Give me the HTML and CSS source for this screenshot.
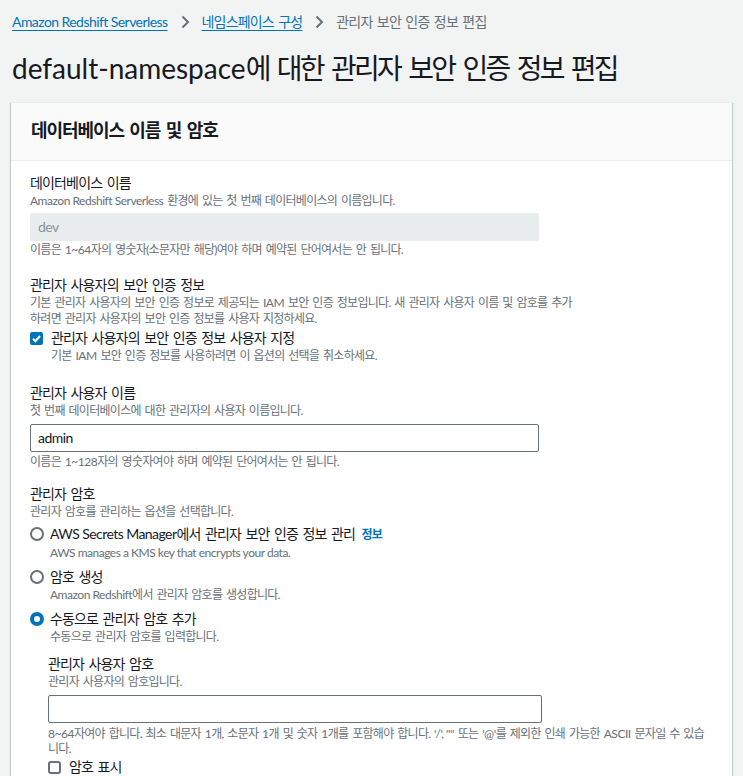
FILE: index.html
```html
<!DOCTYPE html>
<html lang="ko">
<head>
<meta charset="utf-8">
<title>관리자 보안 인증 정보 편집</title>
<link rel="stylesheet" href="styles.css">
</head>
<body>
<nav class="crumbs">
  <a class="crumb-link en" href="#">Amazon Redshift Serverless</a>
  <svg class="chev" width="16" height="16" viewBox="0 0 16 16"><path d="M5.5 2.5 11 8l-5.5 5.5" fill="none" stroke="#687078" stroke-width="2"/></svg>
  <a class="crumb-link" href="#">네임스페이스 구성</a>
  <svg class="chev" width="16" height="16" viewBox="0 0 16 16"><path d="M5.5 2.5 11 8l-5.5 5.5" fill="none" stroke="#687078" stroke-width="2"/></svg>
  <span class="crumb-current">관리자 보안 인증 정보 편집</span>
</nav>

<h1 class="title"><span class="en">default-namespace</span>에 대한 관리자 보안 인증 정보 편집</h1>

<section class="card">
  <header class="card-head">
    <h2 class="card-title">데이터베이스 이름 및 암호</h2>
  </header>
  <div class="card-body">

    <div class="field f1">
      <div class="label">데이터베이스 이름</div>
      <div class="desc"><span class="en">Amazon Redshift Serverless</span> 환경에 있는 첫 번째 데이터베이스의 이름입니다.</div>
      <div class="input disabled"><span class="en">dev</span></div>
      <div class="hint">이름은 <span class="en">1~64</span>자의 영숫자(소문자만 해당)여야 하며 예약된 단어여서는 안 됩니다.</div>
    </div>

    <div class="field f2">
      <div class="label">관리자 사용자의 보안 인증 정보</div>
      <div class="desc">기본 관리자 사용자의 보안 인증 정보로 제공되는 <span class="en">IAM</span> 보안 인증 정보입니다. 새 관리자 사용자 이름 및 암호를 추가<br>하려면 관리자 사용자의 보안 인증 정보를 사용자 지정하세요.</div>
      <div class="check-row">
        <span class="checkbox checked"><svg width="13" height="13" viewBox="0 0 13 13"><path d="M3 6.8 5.4 9.2 10 4" fill="none" stroke="#fff" stroke-width="2"/></svg></span>
        <div class="check-text">
          <div class="opt-label">관리자 사용자의 보안 인증 정보 사용자 지정</div>
          <div class="opt-desc">기본 <span class="en">IAM</span> 보안 인증 정보를 사용하려면 이 옵션의 선택을 취소하세요.</div>
        </div>
      </div>
    </div>

    <div class="field f3">
      <div class="label">관리자 사용자 이름</div>
      <div class="desc">첫 번째 데이터베이스에 대한 관리자의 사용자 이름입니다.</div>
      <div class="input"><span class="en">admin</span></div>
      <div class="hint">이름은 <span class="en">1~128</span>자의 영숫자여야 하며 예약된 단어여서는 안 됩니다.</div>
    </div>

    <div class="field f4">
      <div class="label">관리자 암호</div>
      <div class="desc">관리자 암호를 관리하는 옵션을 선택합니다.</div>
      <div class="radios">
        <div class="radio-row">
          <span class="radio"></span>
          <div class="check-text">
            <div class="opt-label"><span class="en">AWS Secrets Manager</span>에서 관리자 보안 인증 정보 관리 <a class="info" href="#">정보</a></div>
            <div class="opt-desc en">AWS manages a KMS key that encrypts your data.</div>
          </div>
        </div>
        <div class="radio-row">
          <span class="radio"></span>
          <div class="check-text">
            <div class="opt-label">암호 생성</div>
            <div class="opt-desc"><span class="en">Amazon Redshift</span>에서 관리자 암호를 생성합니다.</div>
          </div>
        </div>
        <div class="radio-row">
          <span class="radio on"></span>
          <div class="check-text">
            <div class="opt-label">수동으로 관리자 암호 추가</div>
            <div class="opt-desc">수동으로 관리자 암호를 입력합니다.</div>
          </div>
        </div>
      </div>

      <div class="nested">
        <div class="label">관리자 사용자 암호</div>
        <div class="desc">관리자 사용자의 암호입니다.</div>
        <div class="input pw"></div>
        <div class="hint two"><span class="en">8~64</span>자여야 합니다. 최소 대문자 <span class="en">1</span>개, 소문자 <span class="en">1</span>개 및 숫자 <span class="en">1</span>개를 포함해야 합니다. <span class="en">'/', '"'</span> 또는 <span class="en">'@'</span>를 제외한 인쇄 가능한 <span class="en">ASCII</span> 문자일 수 있습<br>니다.</div>
        <div class="check-row small">
          <span class="checkbox"></span>
          <div class="opt-label">암호 표시</div>
        </div>
      </div>
    </div>

  </div>
</section>
</body>
</html>
```
FILE: styles.css
```css
* {
  box-sizing: border-box;
  letter-spacing: -0.06em;
  word-spacing: 0.12em;
}
.en, .en * {
  letter-spacing: -0.04em;
  word-spacing: 0;
}
html, body {
  margin: 0;
  background: #f2f3f3;
}
body {
  padding: 12px 11px 0;
  font-family: "Lato", "Noto Sans CJK KR", sans-serif;
  color: #16191f;
  font-size: 14px;
}

/* breadcrumbs */
.crumbs {
  display: flex;
  align-items: center;
  gap: 9px;
  height: 20px;
  line-height: 20px;
  font-size: 14px;
  padding-left: 1px;
}
.crumb-link {
  color: #0073bb;
  text-decoration: underline;
  text-underline-offset: 3px;
}
.chev { flex: none; }
.crumb-current {
  color: #687078;
}

.title {
  margin: 18px 0 16px 1px;
  font-size: 28px;
  line-height: 36px;
  font-weight: 400;
  color: #16191f;
  letter-spacing: -0.1em;
  word-spacing: 0.14em;
}
.title .en {
  letter-spacing: 0;
}

/* card */
.card {
  background: #fff;
  box-shadow: 0 1px 1px 0 rgba(0, 28, 36, 0.3), 1px 1px 1px 0 rgba(0, 28, 36, 0.15), -1px 1px 1px 0 rgba(0, 28, 36, 0.15);
  border-top: 1px solid #eaeded;
  min-height: 700px;
}
.card-head {
  background: #fafafa;
  border-bottom: 1px solid #eaeded;
  padding: 16px 20px 19px;
}
.card-title {
  margin: 0;
  font-size: 18px;
  line-height: 22px;
  font-weight: 700;
}
.card-body {
  padding: 12px 19px 0;
}

.label {
  font-size: 14px;
  line-height: 20px;
  color: #16191f;
}
.desc, .hint, .opt-desc {
  font-size: 12px;
  line-height: 16px;
  color: #687078;
}
.input {
  height: 28px;
  width: 509px;
  margin-top: 4px;
  border: 1px solid #687078;
  border-radius: 2px;
  padding: 0 7px;
  font-size: 14px;
  line-height: 26px;
  color: #16191f;
  background: #fff;
}
.input.disabled {
  background: #eaeded;
  border-color: #eaeded;
  color: #879596;
}
.hint { margin-top: 1px; }

.f2 { margin-top: 17px; }
.f3 { margin-top: 19px; }
.f3 .input { margin-top: 5px; }
.f3 .hint { margin-top: 2px; }
.f4 { margin-top: 14px; }

.check-row {
  display: flex;
  gap: 8px;
  margin-top: 1px;
}
.checkbox {
  flex: none;
  width: 13px;
  height: 13px;
  margin-top: 4px;
  border: 2px solid #687078;
  border-radius: 3px;
  background: #fff;
}
.checkbox.checked {
  border: none;
  background: #0073bb;
  border-radius: 2px;
}
.checkbox svg { display: block; }
.opt-label {
  font-size: 14px;
  line-height: 20px;
  color: #16191f;
}

.radios {
  display: flex;
  flex-direction: column;
  gap: 6px;
  margin-top: 4px;
}
.radio-row {
  display: flex;
  gap: 6px;
}
.radio {
  flex: none;
  width: 14px;
  height: 14px;
  margin-top: 3px;
  border: 2px solid #687078;
  border-radius: 50%;
  background: #fff;
}
.radio.on {
  border: 4px solid #0073bb;
}
.info {
  color: #0073bb;
  font-weight: 700;
  font-size: 12px;
  text-decoration: none;
  margin-left: 2px;
}

.nested {
  margin-top: 9px;
  padding-left: 18px;
}
.nested .input {
  width: 494px;
  margin-top: 5px;
}
.hint.two {
  margin-top: 3px;
  line-height: 15px;
}
.check-row.small {
  margin-top: 1px;
}
```
